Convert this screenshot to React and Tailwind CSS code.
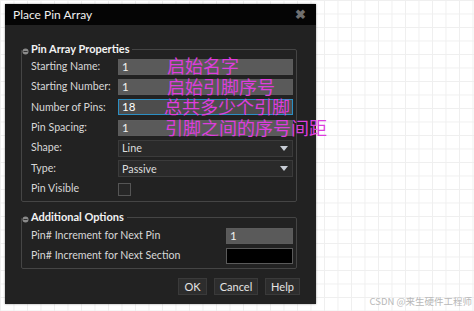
const ui = { fontFamily: 'Lato, "Noto Sans", sans-serif' };
const cjk = { fontFamily: '"Noto Sans CJK SC", sans-serif' };

const Row = ({ label, children }) => (
    <div className="flex items-center h-[20.4px]">
        <span className="w-[87px] shrink-0 text-[10.6px] text-[#d8d8d8]">{label}</span>
        <div className="flex-1">{children}</div>
    </div>
);

const TextBox = ({ value, active }) => (
    <div
        className={
            active
                ? 'h-[16px] border border-[#2b8fc4] bg-[#4d4d4d] pl-[3px] text-[11.5px] leading-[14px] text-white'
                : 'h-[16px] border border-[#5c5c5c] bg-[#5a5a5a] pl-[3px] text-[11.5px] leading-[14px] text-[#f0f0f0]'
        }
    >
        {value}
    </div>
);

const Combo = ({ value }) => (
    <div className="h-[17px] border border-[#3b3b3b] bg-[#2a2a2a] pl-[3px] pr-[4px] flex items-center justify-between text-[10.8px] text-[#dcdcdc]">
        <span>{value}</span>
        <svg width="8" height="5" viewBox="0 0 8 5"><path d="M0 0h8L4 5z" fill="#c8cdd6" /></svg>
    </div>
);

const Legend = ({ children }) => (
    <legend className="flex items-center gap-[2px] pr-[3px] -ml-[9px]">
        <svg width="7" height="7" viewBox="0 0 7 7" className="mt-[4px]">
            <circle cx="3.5" cy="3.5" r="3" fill="#8a8a8a" />
            <path d="M1.5 3.5h4" stroke="#333" strokeWidth="1" />
        </svg>
        <span className="text-[11px] font-bold text-[#f2f2f2]">{children}</span>
    </legend>
);

const Note = ({ top, left, children }) => (
    <div className="absolute text-[18px] leading-[20px] text-[#dd3ddd] whitespace-nowrap" style={{ ...cjk, top, left }}>
        {children}
    </div>
);

export default function App() {
    return (
        <div
            className="relative w-[474px] h-[311px] overflow-hidden bg-white bg-[linear-gradient(#efefef_1px,transparent_1px),linear-gradient(90deg,#efefef_1px,transparent_1px)] bg-[size:13.5px_13.5px] pl-[5px] pt-[4px]"
            style={ui}
        >
            <div className="w-[311px] h-[300px] flex flex-col bg-[#222222] shadow-[0_0_2px_rgba(0,0,0,0.4)]">
                <div className="h-[21px] shrink-0 bg-[#050505] flex items-center justify-between pl-[8px] pr-[10px]">
                    <span className="text-[12px] text-[#f0f0f0]">Place Pin Array</span>
                    <span className="text-[13px] font-bold leading-none text-[#6f6f6f]">✖</span>
                </div>
                <div className="flex-1 flex flex-col pl-[16px] pr-[19px] pt-[16px]">
                    <fieldset className="border border-[#454545] rounded-[2px] pl-[9px] pr-[3px] h-[161px]">
                        <Legend>Pin Array Properties</Legend>
                        <div className="flex flex-col -mt-[1px]">
                            <Row label="Starting Name:"><TextBox value="1" /></Row>
                            <Row label="Starting Number:"><TextBox value="1" /></Row>
                            <Row label="Number of Pins:"><TextBox value="18" active /></Row>
                            <Row label="Pin Spacing:"><TextBox value="1" /></Row>
                            <Row label="Shape:"><Combo value="Line" /></Row>
                            <Row label="Type:"><Combo value="Passive" /></Row>
                            <Row label="Pin Visible">
                                <div className="w-[13px] h-[13px] border border-[#555] bg-[#262626]" />
                            </Row>
                        </div>
                    </fieldset>
                    <fieldset className="mt-[7px] border border-[#454545] rounded-[2px] pl-[9px] pr-[3px] h-[60px]">
                        <Legend>Additional Options</Legend>
                        <div className="flex flex-col">
                            <div className="flex items-center justify-between h-[20.4px]">
                                <span className="text-[10.6px] text-[#d8d8d8]">Pin# Increment for Next Pin</span>
                                <div className="w-[67px]"><TextBox value="1" /></div>
                            </div>
                            <div className="flex items-center justify-between h-[20.4px]">
                                <span className="text-[10.6px] text-[#d8d8d8]">Pin# Increment for Next Section</span>
                                <div className="w-[67px] h-[16px] border border-[#5a5a5a] bg-black" />
                            </div>
                        </div>
                    </fieldset>
                    <div className="flex justify-end gap-[7px] mt-[9px] -mr-[3px]">
                        <button className="w-[29px] h-[17px] border border-[#3a3a3a] bg-[#2d2d2d] text-[11px] text-[#e4e4e4]">OK</button>
                        <button className="w-[44px] h-[17px] border border-[#3a3a3a] bg-[#2d2d2d] text-[11px] text-[#e4e4e4]">Cancel</button>
                        <button className="w-[35px] h-[17px] border border-[#3a3a3a] bg-[#2d2d2d] text-[11px] text-[#e4e4e4]">Help</button>
                    </div>
                </div>
            </div>

            <Note top={55} left={167}>启始名字</Note>
            <Note top={76} left={167}>启始引脚序号</Note>
            <Note top={96} left={164}>总共多少个引脚</Note>
            <Note top={117} left={165}>引脚之间的序号间距</Note>

            <div className="absolute right-[2px] bottom-[3px] text-[9.5px] text-[#b8b8b8]" style={cjk}>
                CSDN @来生硬件工程师
            </div>
        </div>
    );
}
